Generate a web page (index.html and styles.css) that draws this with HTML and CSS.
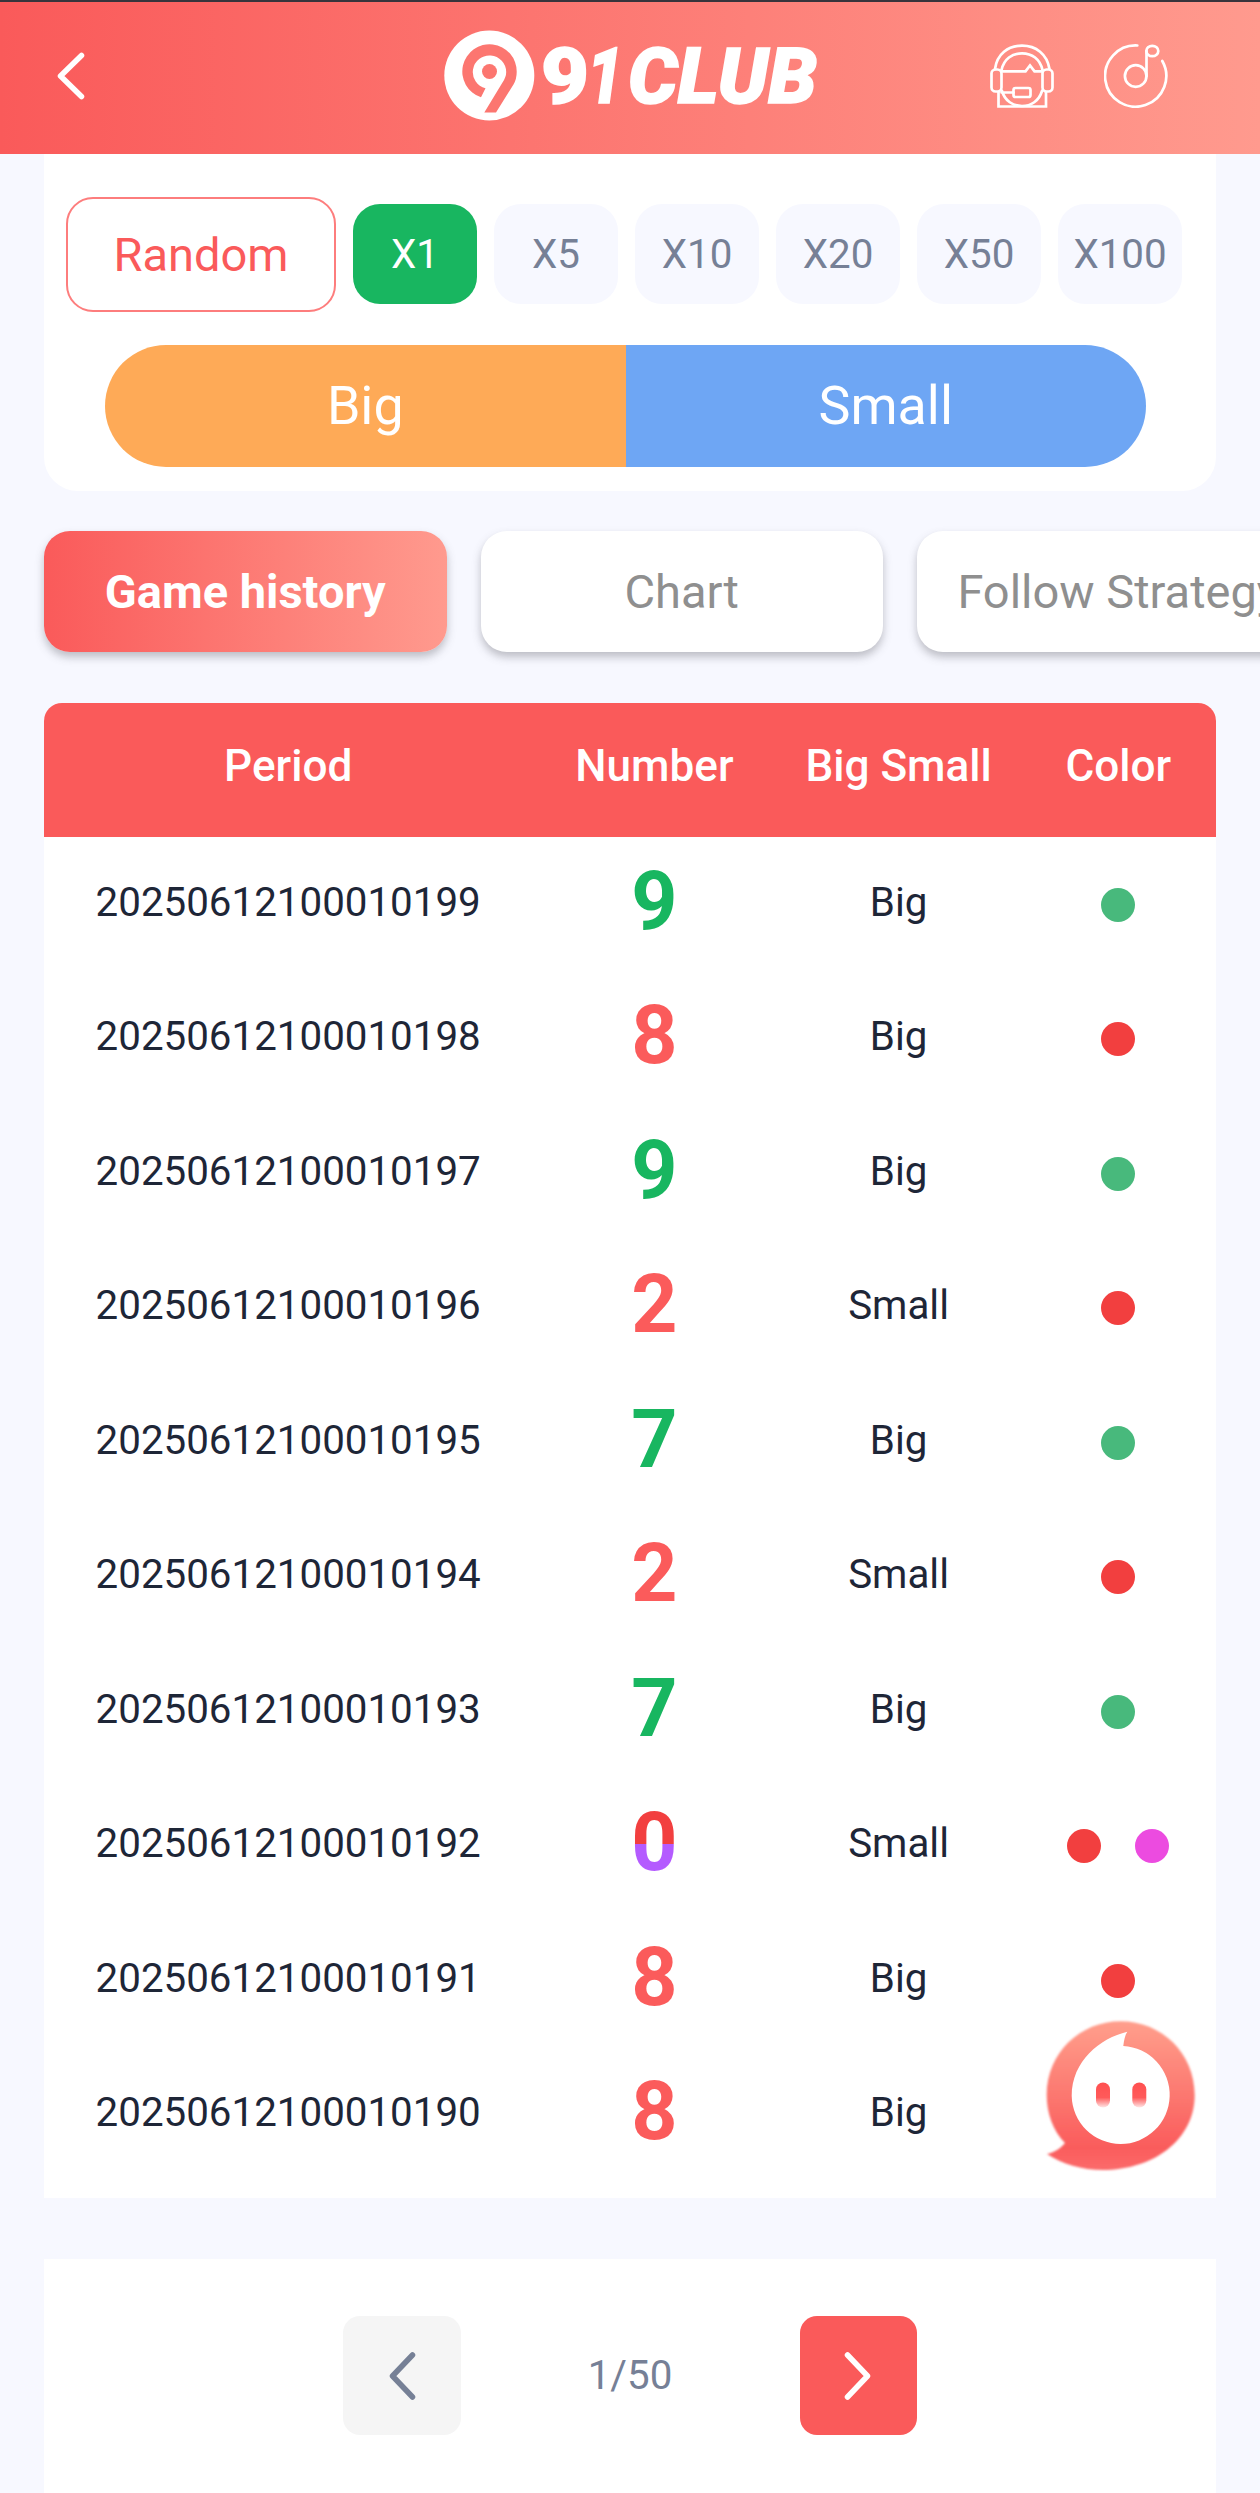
FILE: index.html
```html
<!DOCTYPE html>
<html lang="en">
  <head>
    <meta charset="utf-8">
    <meta name="viewport" content="width=device-width">
    <title>91 CLUB</title>
    <link rel="stylesheet" href="styles.css">
  </head>
  <body>
    <header class="navbar">
      <svg class="back" viewBox="0 0 28 48" width="28" height="48">
        <path d="M24.5 3.5L3.5 24l21 20.5" />
      </svg>
      <svg class="logo" viewBox="0 0 376 92" width="376" height="92">
        <circle cx="45.3" cy="45.5" r="45" fill="#fff" />
        <!-- emblem ring and tail -->
        <path fill="#fc7670" d="M37 67.3A27.2 27.2 0 1 1 72.7 42Q72.7 49 69.500 54.500L52 82.500H40.300L58.500 52.500Q62.200 47 62.200 42A16.700 16.700 0 1 0 41.500 58.300Z" />
        <circle cx="45.500" cy="41.500" r="7.500" fill="#fc7670" />
        <text class="digits" x="97" y="72.500" textLength="48" lengthAdjust="spacingAndGlyphs">9</text>
        <text class="digits slant" x="143" y="72.500" textLength="36" lengthAdjust="spacingAndGlyphs">1</text>
        <text class="slant" x="184" y="72.500" textLength="189" lengthAdjust="spacingAndGlyphs">CLUB</text>
      </svg>
      <div class="tools">
        <!-- customer service -->
        <svg viewBox="0 0 64 64" width="64" height="64">
          <path d="M5 25C7 10 18 1.700 32 1.700S57 10 59.500 25" />
          <path d="M11.500 26C14 15 22 9.300 32 9.300S50 15 52.500 26" />
          <rect x="1.500" y="25.500" width="10" height="22" rx="4" />
          <rect x="52.500" y="25.500" width="10" height="22" rx="4" />
          <path d="M11.500 27.300H35.500L40 21.500l4.500 5.800H52.500" />
          <rect x="23.500" y="44" width="17" height="9" rx="2" />
          <path d="M11.500 48.500H23.500M12 47C15 57 23 62 32 62S49 57 52 47" />
          <path d="M8.500 48V62.500H56V48" />
        </svg>
        <!-- music -->
        <svg viewBox="0 0 64 64" width="64" height="64">
          <path d="M33.300 1.500A30.600 30.600 0 1 0 58.300 17" />
          <circle cx="31.700" cy="32" r="10.800" />
          <path d="M42.500 32V7" />
          <ellipse cx="48.300" cy="7" rx="6" ry="5.200" />
        </svg>
      </div>
    </header>

    <section class="bet">
      <div class="multiples">
        <button class="random">Random</button>
        <button class="times active">X1</button>
        <button class="times">X5</button>
        <button class="times">X10</button>
        <button class="times">X20</button>
        <button class="times">X50</button>
        <button class="times">X100</button>
      </div>
      <div class="sizes">
        <button class="big">Big</button>
        <button class="small">Small</button>
      </div>
    </section>

    <nav class="tabs">
      <button class="tab active">Game history</button>
      <button class="tab">Chart</button>
      <button class="tab">Follow Strategy</button>
    </nav>

    <section class="history">
      <div class="row head"><div>Period</div><div>Number</div><div>Big Small</div><div>Color</div></div>
      <div class="row"><div>20250612100010199</div><div class="num green">9</div><div>Big</div><div class="dots"><i class="g"></i></div></div>
      <div class="row"><div>20250612100010198</div><div class="num red">8</div><div>Big</div><div class="dots"><i class="r"></i></div></div>
      <div class="row"><div>20250612100010197</div><div class="num green">9</div><div>Big</div><div class="dots"><i class="g"></i></div></div>
      <div class="row"><div>20250612100010196</div><div class="num red">2</div><div>Small</div><div class="dots"><i class="r"></i></div></div>
      <div class="row"><div>20250612100010195</div><div class="num green">7</div><div>Big</div><div class="dots"><i class="g"></i></div></div>
      <div class="row"><div>20250612100010194</div><div class="num red">2</div><div>Small</div><div class="dots"><i class="r"></i></div></div>
      <div class="row"><div>20250612100010193</div><div class="num green">7</div><div>Big</div><div class="dots"><i class="g"></i></div></div>
      <div class="row"><div>20250612100010192</div><div class="num mixed">0</div><div>Small</div><div class="dots"><i class="r"></i><i class="v"></i></div></div>
      <div class="row"><div>20250612100010191</div><div class="num red">8</div><div>Big</div><div class="dots"><i class="r"></i></div></div>
      <div class="row"><div>20250612100010190</div><div class="num red">8</div><div>Big</div><div class="dots"><i class="r"></i></div></div>
    </section>

    <section class="pager">
      <button class="page prev">
        <svg viewBox="0 0 28 48" width="28" height="48"><path d="M24.500 3L4.500 24l20 21" /></svg>
      </button>
      <span class="count">1/50</span>
      <button class="page next">
        <svg viewBox="0 0 28 48" width="28" height="48"><path d="M3.500 3l20 21-20 21" /></svg>
      </button>
    </section>

    <!-- floating support bubble -->
    <svg class="support" viewBox="0 0 162 162" width="162" height="162">
      <defs>
        <linearGradient id="bubble" x1="0" y1="0" x2="0" y2="1">
          <stop offset="0" stop-color="#ff9f8c" />
          <stop offset=".85" stop-color="#fa5c5c" />
          <stop offset="1" stop-color="#fb6b6b" />
        </linearGradient>
        <linearGradient id="eye" x1="0" y1="0" x2="0" y2="1">
          <stop offset="0" stop-color="#ff5050" />
          <stop offset=".6" stop-color="#ff5a5a" />
          <stop offset="1" stop-color="#ff5a5a" stop-opacity=".15" />
        </linearGradient>
        <filter id="soft"><feGaussianBlur stdDeviation="1" /></filter>
      </defs>
      <path filter="url(#soft)" fill="url(#bubble)" d="M25 128C13 116 6.700 98 6.700 80C6.700 38 40 6.300 80.700 6.300S154.700 38 154.700 80C154.700 125 113 155 63 155C42 155 22 149 7 139C15 137 21 133 25 128Z" />
      <path fill="#fff" d="M83.300 31C84 25 85 20 87.300 16.700C60 23 31.700 46 31.700 81A49 49 0 1 0 83.300 31Z" />
      <rect x="56" y="67.500" width="14" height="25" rx="7" fill="url(#eye)" />
      <rect x="92.300" y="67.500" width="14" height="25" rx="7" fill="url(#eye)" />
    </svg>
  </body>
</html>
```
FILE: styles.css
```css
* {
  box-sizing: border-box;
}
html {
  overflow: hidden;
}
body {
  margin: 0;
  width: 1260px;
  height: 2493px;
  overflow: hidden;
  display: flex;
  flex-direction: column;
  background: #f7f8ff;
  color: #1e2637;
  font-family: Roboto, sans-serif;
  font-size: 40.32px;
}
button {
  border: 0;
  padding: 0;
  font: inherit;
  white-space: nowrap;
}

/* top bar */
.navbar {
  flex: none;
  display: flex;
  align-items: center;
  height: 153.5px;
  padding: 0 92px 4px 57px;
  border-top: 2.5px solid #38343c;
  background: linear-gradient(90deg, #fa5a5a, #ff9a8e) border-box;
}
.navbar svg {
  flex: none;
}
.back path,
.page path {
  fill: none;
  stroke: #fff;
  stroke-width: 5.5;
  stroke-linecap: round;
  stroke-linejoin: round;
}
.logo {
  margin-left: 359px;
}
.logo text {
  fill: #fff;
  stroke: #fff;
  stroke-width: 1.5;
  font-size: 77px;
  font-weight: 900;
}
.logo .slant {
  font-style: italic;
}
.tools {
  display: flex;
  gap: 50px;
  margin-left: auto;
}
.tools svg {
  fill: none;
  stroke: #fff;
  stroke-width: 2.7;
  stroke-linecap: round;
}

/* bet panel */
.bet {
  flex: none;
  height: 337.5px;
  margin: 0 44px;
  padding: 43px 33px 0 22px;
  border-radius: 0 0 34px 34px;
  background: #fff;
}
.multiples {
  display: flex;
  align-items: center;
  gap: 17px;
}
.random {
  width: 270px;
  height: 115px;
  border: 2px solid #fd7d7d;
  border-radius: 27px;
  background: #fff;
  color: #fa5a5a;
  font-size: 47px;
}
.times {
  width: 124px;
  height: 100px;
  border-radius: 27px;
  background: #f7f8ff;
  color: #768096;
}
.times.active {
  background: #18b660;
  color: #fff;
}
.sizes {
  display: flex;
  width: 1041px;
  height: 122px;
  margin: 33px 0 0 39px;
  border-radius: 61px;
  overflow: hidden;
  color: #fff;
  font-size: 53.76px;
}
.sizes button {
  flex: 1;
  color: #fff;
}
.big {
  background: #feaa57;
}
.small {
  background: #6ea6f4;
}

/* tabs, the last one runs off the right edge */
.tabs {
  flex: none;
  display: flex;
  gap: 34px;
  margin: 40px 0 0 44px;
}
.tab {
  flex: none;
  width: 402.5px;
  height: 121px;
  border-radius: 26px;
  background: #fff;
  box-shadow: 0 5px 8px rgba(80, 80, 90, .35);
  color: #8f8f8f;
  font-size: 47px;
}
.tab.active {
  background: linear-gradient(90deg, #fa5a5a, #ff9a8e);
  color: #fff;
  font-weight: 700;
}

/* history table */
.history {
  flex: none;
  height: 1495px;
  margin: 50.5px 44px 0;
  border-radius: 18px 18px 0 0;
  overflow: hidden;
  background: #fff;
}
.row {
  display: grid;
  grid-template-columns: 10fr 5fr 5fr 4fr;
  align-items: center;
  height: 134.5px;
  padding-bottom: 4px;
  text-align: center;
}
.head {
  padding-bottom: 8px;
  background: #fa5a5a;
  color: #fff;
  font-size: 44.1px;
  font-weight: 500;
}
.num {
  font-size: 80.64px;
  font-weight: 700;
  line-height: 1;
}
.green {
  color: #18b660;
}
.red {
  color: #fb5b5b;
}
.mixed {
  background: linear-gradient(#f23f3f 51%, #b45bff 51%);
  background-clip: text;
  -webkit-background-clip: text;
  color: transparent;
}
.dots {
  display: flex;
  justify-content: center;
  gap: 34px;
  padding-top: 5px;
}
.dots i {
  width: 34px;
  height: 34px;
  border-radius: 50%;
}
.g {
  background: #48b97c;
}
.r {
  background: #f23f3f;
}
.v {
  background: #ec4be0;
}

/* pager */
.pager {
  flex: 1;
  display: flex;
  justify-content: center;
  align-items: flex-start;
  margin: 61px 44px 0;
  padding-top: 57.5px;
  background: #fff;
}
.page {
  display: flex;
  align-items: center;
  justify-content: center;
  width: 117.5px;
  height: 119px;
  border-radius: 17px;
}
.prev {
  background: #f5f5f5;
}
.prev path {
  stroke: #768096;
}
.next {
  background: #fa5a5a;
}
.count {
  width: 339px;
  line-height: 119px;
  text-align: center;
  color: #768096;
}

.support {
  position: fixed;
  left: 1040px;
  top: 2015px;
}
```
